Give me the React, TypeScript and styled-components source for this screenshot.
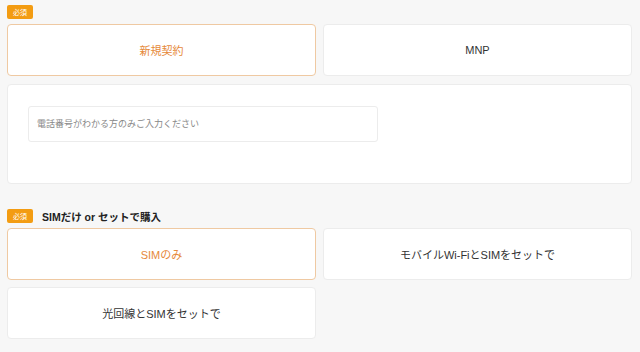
import React, { useState } from "react";
import styled, { createGlobalStyle } from "styled-components";

const GlobalStyle = createGlobalStyle`
    html, body {
        margin: 0;
        padding: 0;
        background: #f7f7f7;
        font-family: "Liberation Sans", "Noto Sans CJK JP", sans-serif;
        color: #333;
    }
    * { box-sizing: border-box; }
`;

const Page = styled.div`
    width: 640px;
    height: 352px;
    overflow: hidden;
    padding: 5px 8px 0 7px;
`;

const Section = styled.section<{ $top?: number }>`
    margin-top: ${(p) => p.$top || 0}px;
`;

const Header = styled.div`
    display: flex;
    align-items: center;
    gap: 9px;
    height: 14px;
    margin-bottom: 5px;
`;

const Badge = styled.span`
    display: inline-flex;
    align-items: center;
    justify-content: center;
    width: 26px;
    height: 14px;
    border-radius: 2px;
    background: #f39c12;
    color: #fff;
    font-size: 7px;
    line-height: 1;
`;

const Title = styled.h2`
    margin: 0;
    font-size: 10.5px;
    font-weight: bold;
    color: #222;
`;

const Grid = styled.div`
    display: grid;
    grid-template-columns: 1fr 1fr;
    gap: 7px;
`;

const Choice = styled.button<{ $active?: boolean }>`
    height: 52px;
    border-radius: 4px;
    border: 1px solid ${(p) => (p.$active ? "#efc9a2" : "#ececec")};
    background: #fff;
    color: ${(p) => (p.$active ? "#e6893a" : "#333")};
    font-family: inherit;
    font-size: 11px;
    cursor: pointer;
    padding: 0;
`;

const Panel = styled.div`
    margin-top: 8px;
    height: 100px;
    background: #fff;
    border: 1px solid #ececec;
    border-radius: 4px;
    padding: 21px 0 0 20px;
`;

const Input = styled.input`
    width: 350px;
    height: 36px;
    border: 1px solid #ececec;
    border-radius: 3px;
    padding: 0 8px;
    font-family: inherit;
    font-size: 9px;
    color: #333;
    outline: none;

    &::placeholder {
        color: #888;
    }
`;

const contractTypes = ["新規契約", "MNP"];
const purchaseTypes = ["SIMのみ", "モバイルWi-FiとSIMをセットで", "光回線とSIMをセットで"];

const App = () => {
    const [contract, setContract] = useState("新規契約");
    const [purchase, setPurchase] = useState("SIMのみ");
    const [phone, setPhone] = useState("");

    return (
        <React.Fragment>
            <GlobalStyle />
            <Page>
                <Section>
                    <Header>
                        <Badge>必須</Badge>
                    </Header>
                    <Grid>
                        {contractTypes.map((c) => (
                            <Choice key={c} $active={contract === c} onClick={() => setContract(c)}>
                                {c}
                            </Choice>
                        ))}
                    </Grid>
                    <Panel>
                        <Input
                            type="tel"
                            value={phone}
                            placeholder="電話番号がわかる方のみご入力ください"
                            onChange={(e) => setPhone(e.target.value)}
                        />
                    </Panel>
                </Section>

                <Section $top={25}>
                    <Header>
                        <Badge>必須</Badge>
                        <Title>SIMだけ or セットで購入</Title>
                    </Header>
                    <Grid>
                        {purchaseTypes.map((p) => (
                            <Choice key={p} $active={purchase === p} onClick={() => setPurchase(p)}>
                                {p}
                            </Choice>
                        ))}
                    </Grid>
                </Section>
            </Page>
        </React.Fragment>
    );
};

export default App;
